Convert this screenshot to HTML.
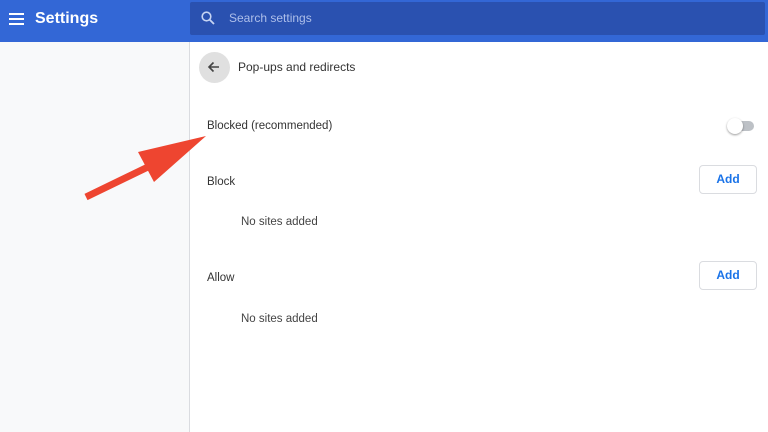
<!DOCTYPE html><html><head><style>
body{margin:0;width:768px;height:432px;overflow:hidden;font-family:"Liberation Sans",sans-serif;background:#fff;position:relative}
.hdr{position:absolute;left:0;top:0;width:768px;height:42px;background:#3367d6}
.side{position:absolute;left:0;top:42px;width:189px;height:390px;background:#f8f9fa;border-right:1px solid #dadce0}
.t{position:absolute;white-space:nowrap}
.btn{position:absolute;left:699px;width:56px;height:27px;border:1px solid #dadce0;border-radius:4px;color:#1a73e8;font-size:12px;font-weight:bold;text-align:center;line-height:27px}
</style></head><body>
<div class="hdr"></div>
<svg class="t" style="left:9px;top:13px" width="16" height="14"><rect y="0" width="15" height="2" fill="#fff"/><rect y="5" width="15" height="2" fill="#fff"/><rect y="10" width="15" height="2" fill="#fff"/></svg>
<div class="t" style="left:35px;top:10px;color:#fff;font-size:16px;font-weight:bold">Settings</div>
<div class="t" style="left:190px;top:2px;width:575px;height:33px;background:#2a51b0;border-radius:2px"></div>
<svg class="t" style="left:201px;top:11px" width="14" height="14"><circle cx="5.5" cy="5.5" r="4.3" fill="none" stroke="#c6d4f3" stroke-width="1.6"/><line x1="8.6" y1="8.6" x2="13" y2="13" stroke="#c6d4f3" stroke-width="1.8"/></svg>
<div class="t" style="left:229px;top:11px;color:#aebfea;font-size:12px">Search settings</div>
<div class="side"></div>
<div class="t" style="left:199px;top:52px;width:31px;height:31px;border-radius:50%;background:#e0e0e0"></div>
<svg class="t" style="left:207px;top:60px" width="14" height="14"><path d="M12 7H2M6.5 2.5L2 7l4.5 4.5" fill="none" stroke="#444" stroke-width="1.6"/></svg>
<div class="t" style="left:238px;top:60px;font-size:12px;color:#333">Pop-ups and redirects</div>
<div class="t" style="left:207px;top:120px;font-size:11.5px;color:#333">Blocked (recommended)</div>
<div class="t" style="left:730px;top:121px;width:24px;height:10px;border-radius:5px;background:#bdc1c6"></div>
<div class="t" style="left:727px;top:118px;width:16px;height:16px;border-radius:50%;background:#fff;box-shadow:0 1px 2px rgba(0,0,0,.4)"></div>
<div class="t" style="left:207px;top:176px;font-size:11.5px;color:#333">Block</div>
<div class="btn" style="top:165px">Add</div>
<div class="t" style="left:241px;top:216px;font-size:11.5px;color:#444">No sites added</div>
<div class="t" style="left:207px;top:272px;font-size:11.5px;color:#333">Allow</div>
<div class="btn" style="top:261px">Add</div>
<div class="t" style="left:241px;top:313px;font-size:11.5px;color:#444">No sites added</div>
<svg class="t" style="left:0;top:0" width="768" height="432"><line x1="86" y1="197" x2="150" y2="166" stroke="#ee4530" stroke-width="7"/><polygon points="206,136 138,152 154,182" fill="#ee4530"/></svg>
</body></html>
